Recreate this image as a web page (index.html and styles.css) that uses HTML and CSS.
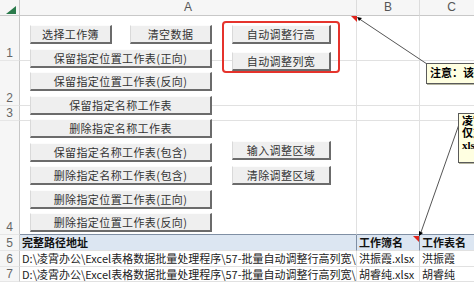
FILE: index.html
```html
<!DOCTYPE html>
<html>
	<head>
		<meta charset="UTF-8">
		<title>批量自动调整行高列宽</title>
		<link rel="stylesheet" href="styles.css">
	</head>
	<body>
		<div class="sheet">
			<div class="grid">
				<!-- 列标题 -->
				<div class="cell corner"><span class="corner-mark"></span></div>
				<div class="cell col-head">A</div>
				<div class="cell col-head">B</div>
				<div class="cell col-head">C</div>

				<div class="cell row-head">1</div>
				<div class="cell"></div>
				<div class="cell"></div>
				<div class="cell"></div>

				<div class="cell row-head">2</div>
				<div class="cell"></div>
				<div class="cell"></div>
				<div class="cell"></div>

				<div class="cell row-head">3</div>
				<div class="cell"></div>
				<div class="cell"></div>
				<div class="cell"></div>

				<div class="cell row-head">4</div>
				<div class="cell above-table"></div>
				<div class="cell above-table"></div>
				<div class="cell above-table"></div>

				<!-- 数据区 -->
				<div class="cell row-head mid">5</div>
				<div class="cell table-head">完整路径地址</div>
				<div class="cell table-head">工作簿名</div>
				<div class="cell table-head">工作表名</div>

				<div class="cell row-head mid">6</div>
				<div class="cell">D:\凌霄办公\Excel表格数据批量处理程序\57-批量自动调整行高列宽\洪振霞.xlsx</div>
				<div class="cell">洪振霞.xlsx</div>
				<div class="cell">洪振霞</div>

				<div class="cell row-head mid">7</div>
				<div class="cell">D:\凌霄办公\Excel表格数据批量处理程序\57-批量自动调整行高列宽\胡睿纯.xlsx</div>
				<div class="cell">胡睿纯.xlsx</div>
				<div class="cell">胡睿纯</div>
			</div>

			<!-- 表单按钮 -->
			<div class="btn-group left-group">
				<div class="btn-pair">
					<div class="btn">选择工作簿</div>
					<div class="btn">清空数据</div>
				</div>
				<div class="btn">保留指定位置工作表(正向)</div>
				<div class="btn">保留指定位置工作表(反向)</div>
				<div class="btn">保留指定名称工作表</div>
				<div class="btn">删除指定名称工作表</div>
				<div class="btn">保留指定名称工作表(包含)</div>
				<div class="btn">删除指定名称工作表(包含)</div>
				<div class="btn">删除指定位置工作表(正向)</div>
				<div class="btn">删除指定位置工作表(反向)</div>
			</div>

			<div class="btn-group auto-group">
				<div class="btn">自动调整行高</div>
				<div class="btn">自动调整列宽</div>
			</div>

			<div class="btn-group range-group">
				<div class="btn">输入调整区域</div>
				<div class="btn">清除调整区域</div>
			</div>

			<!-- 批注连线 -->
			<svg class="links" width="474" height="282" viewBox="0 0 474 282">
				<polygon points="351,16 357,16 357,22" fill="#e0241b"/>
				<line x1="358" y1="18" x2="427" y2="64" stroke="#555" stroke-width="1"/>
				<polygon points="357,17 362,18 359,21" fill="#000"/>

				<polygon points="413,236 419,236 419,242" fill="#e0241b"/>
				<line x1="420" y1="235" x2="463" y2="113" stroke="#555" stroke-width="1"/>
				<polygon points="419,236 419,231 423,233" fill="#000"/>
			</svg>

			<div class="note note-top">注意：该按钮只调整指定区域</div>
			<div class="note note-side">
				<div>凌霄办公提示：</div>
				<div>仅支持工作簿</div>
				<div>xlsx文件</div>
			</div>
		</div>
	</body>
</html>
```

FILE: styles.css
```css
* {
	margin: 0;
	padding: 0;
}
body {
	background: #fff;
	font-family: "Noto Sans CJK SC", sans-serif;
	overflow: hidden;
}

.sheet {
	position: relative;
	width: 474px;
	height: 282px;
	overflow: hidden;
}

.grid {
	display: grid;
	grid-template-columns: 20px 337px 63px 64px;
	grid-template-rows: 16px 45px 45px 15px 114px 16px 16px 15px;
}
.cell {
	box-sizing: border-box;
	border-right: 1px solid #e1e1e1;
	border-bottom: 1px solid #e1e1e1;
	padding-left: 2px;
	font-size: 11px;
	line-height: 15px;
	color: #222;
	white-space: nowrap;
	overflow: hidden;
}

.corner {
	background: #f6f6f6;
	border-right-color: #c8c8c8;
	border-bottom-color: #c8c8c8;
	position: relative;
}
.corner-mark {
	position: absolute;
	right: 3px;
	bottom: 1px;
	width: 0;
	height: 0;
	border-left: 10px solid transparent;
	border-bottom: 8px solid #2a7a4b;
}

.col-head {
	background: #f6f6f6;
	border-bottom-color: #c8c8c8;
	border-right-color: #dcdcdc;
	padding-left: 0;
	text-align: center;
	font-family: "Liberation Sans", sans-serif;
	font-size: 12px;
	line-height: 15px;
	color: #555;
}

.row-head {
	background: #f6f6f6;
	border-right-color: #c8c8c8;
	border-bottom-color: #e6e6e6;
	padding-left: 0;
	display: flex;
	align-items: flex-end;
	justify-content: center;
	font-family: "Liberation Sans", sans-serif;
	font-size: 12px;
	line-height: 14px;
	color: #666;
}
.row-head.mid {
	align-items: center;
}

.above-table {
	border-bottom-color: #7f8fa4;
}
.table-head {
	background: #dce6f2;
	border-right-color: #7f8fa4;
	font-weight: bold;
	color: #111;
}

/* 按钮 */
.btn-group {
	position: absolute;
	display: flex;
	flex-direction: column;
}
.left-group {
	left: 30px;
	top: 25px;
	width: 182px;
	gap: 4.5px;
}
.btn-pair {
	display: flex;
	justify-content: space-between;
}
.btn-pair .btn {
	width: 82px;
}
.auto-group {
	left: 222px;
	top: 21px;
	width: 118px;
	height: 52px;
	box-sizing: border-box;
	padding: 2px 0 0 8px;
	gap: 8px;
	border: 2px solid #e5332c;
	border-radius: 4px;
}
.auto-group .btn,
.range-group .btn {
	width: 99px;
}
.range-group {
	left: 232px;
	top: 141px;
	gap: 6px;
}

.btn {
	box-sizing: border-box;
	height: 19px;
	background: #efefef;
	border-top: 1px solid #fcfcfc;
	border-left: 1px solid #d9d9d9;
	border-right: 2px solid #6b6b6b;
	border-bottom: 2px solid #6b6b6b;
	font-size: 11px;
	letter-spacing: 0.4px;
	line-height: 16px;
	text-align: center;
	color: #333;
	white-space: nowrap;
}

/* 批注 */
.links {
	position: absolute;
	left: 0;
	top: 0;
}
.note {
	position: absolute;
	box-sizing: border-box;
	background: #ffffe1;
	border: 1px solid #5a5a5a;
	box-shadow: 1px 1px 0 #b5b5a0;
	font-family: "Liberation Serif", "Noto Sans CJK SC", serif;
	font-weight: bold;
	font-size: 11px;
	color: #000;
	white-space: nowrap;
}
.note-top {
	left: 426px;
	top: 63px;
	width: 150px;
	height: 21px;
	padding: 2px 0 0 3px;
	line-height: 15px;
}
.note-side {
	left: 458px;
	top: 113px;
	width: 110px;
	height: 50px;
	padding: 1px 0 0 3px;
	line-height: 12px;
}
```
